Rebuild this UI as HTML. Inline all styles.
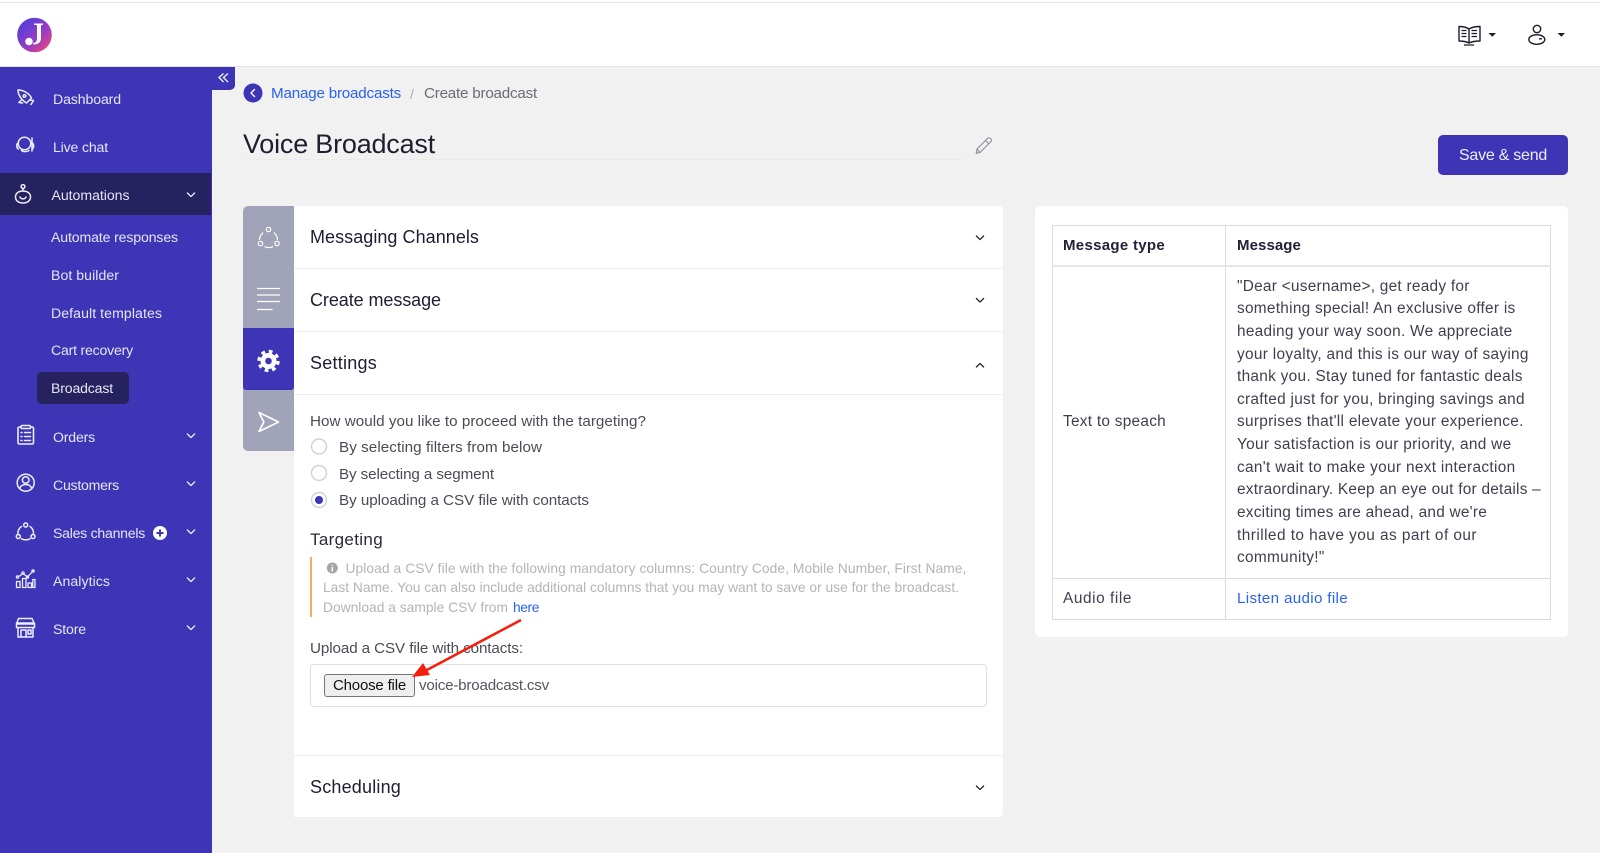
<!DOCTYPE html>
<html lang="en">
<head>
<meta charset="utf-8">
<title>Voice Broadcast</title>
<style>
html,body{margin:0;padding:0;width:1600px;height:853px;overflow:hidden;background:#f1f1f2;font-family:"Liberation Sans",Arial,sans-serif;color:#1c1c30}
#w{position:absolute;left:0;top:0;width:1600px;height:853px;filter:blur(.35px)}
.b{position:absolute;display:block}
.t{position:absolute;white-space:nowrap;height:20px;line-height:20px;font-size:14px;margin-top:1px}
.s{color:#e6e5f7;font-size:14.1px;margin-top:0}
.d{color:#1d1d33;font-size:18px}
.g{color:#4b4b57;font-size:15.2px}
.n{color:#b4b4b8;font-size:13.8px}
.m{color:#3f3f50;font-size:15.4px}
a{color:#2a62f0;text-decoration:none}
</style>
</head>
<body>
<div id="w">
<div class="b" style="left:0;top:0;width:1600px;height:67px;background:#fff;border-bottom:1px solid #e6e6e8;box-sizing:border-box"></div>
<div class="b" style="left:0;top:2px;width:1600px;height:1px;background:#e6e6e8"></div>
<div class="b" style="left:0;top:67px;width:212px;height:786px;background:#3d35b5"></div>
<div class="b" style="left:0;top:173px;width:211px;height:42px;background:#26215f"></div>
<div class="b" style="left:37px;top:372px;width:92px;height:32px;background:#26215f;border-radius:5px"></div>
<div class="b" style="left:211px;top:67px;width:24px;height:23px;background:#3d35b5;border-radius:0 0 5px 0"></div>

<div class="b" style="left:243px;top:159px;width:722px;height:1px;background:#ebebec"></div>
<div class="b" style="left:1438px;top:135px;width:130px;height:40px;background:#3d35b5;border-radius:5px"></div>

<div class="b" style="left:243px;top:206px;width:51px;height:245px;background:#a1a3b9;border-radius:5px 0 0 5px"></div>
<div class="b" style="left:243px;top:328px;width:51px;height:62px;background:#3d35b5;border-radius:0 0 3px 3px"></div>
<div class="b" style="left:294px;top:206px;width:709px;height:611px;background:#fff;border-radius:0 4px 4px 0"></div>
<div class="b" style="left:294px;top:268px;width:709px;height:1px;background:#ececee"></div>
<div class="b" style="left:294px;top:331px;width:709px;height:1px;background:#ececee"></div>
<div class="b" style="left:294px;top:394px;width:709px;height:1px;background:#ececee"></div>
<div class="b" style="left:294px;top:755px;width:709px;height:1px;background:#ececee"></div>
<div class="b" style="left:310px;top:557px;width:2px;height:60px;background:#f7ae5c"></div>
<div class="b" style="left:310px;top:664px;width:677px;height:43px;box-sizing:border-box;background:#fff;border:1px solid #dfdfe2;border-radius:4px"></div>
<div class="b" style="left:324px;top:674px;width:91px;height:23px;box-sizing:border-box;background:#efefef;border:1px solid #767676;border-radius:3px"></div>

<div class="b" style="left:1035px;top:206px;width:533px;height:431px;background:#fff;border-radius:5px"></div>
<div class="b" style="left:1052px;top:225px;width:499px;height:395px;box-sizing:border-box;border:1px solid #dcdcdf"></div>
<div class="b" style="left:1225px;top:225px;width:1px;height:395px;background:#dcdcdf"></div>
<div class="b" style="left:1052px;top:265px;width:499px;height:2px;background:#e6e6e8"></div>
<div class="b" style="left:1052px;top:578px;width:499px;height:1px;background:#dcdcdf"></div>

<svg class="b" style="left:0;top:0" width="1600" height="853" viewBox="0 0 1600 853" fill="none">
<defs>
<linearGradient id="lg" x1="0" y1="0" x2="1" y2="1"><stop offset="0" stop-color="#3d3fe0"/><stop offset=".6" stop-color="#9c3cc4"/><stop offset="1" stop-color="#ff4a60"/></linearGradient>
<path id="ch" d="M-3.600-2 0 1.600 3.600-2" stroke-width="1.300" stroke-linecap="round" stroke-linejoin="round"/>
</defs>
<circle cx="34.500" cy="35" r="17.300" fill="url(#lg)"/>
<path d="M34 23.500H43V24.800L41 25.300V38C41 42 38.500 44.500 33.500 44.500L33 43C35.500 43 37 41.500 37 38.500V25.300L34 24.800Z" fill="#fff"/>
<circle cx="29" cy="41.500" r="3.800" fill="#fff"/>

<g stroke="#eeedfb" stroke-width="1.500" stroke-linecap="round" stroke-linejoin="round">
<path d="M18 90C23 90 29 93 31.500 98L26.500 103C22 100.500 18 95 18 90Z"/><circle cx="24.500" cy="96" r="1.300"/><path d="M21.500 100 18.800 102.500 22.500 103M29.800 100 33.500 100.500 31 104.500"/>
<circle cx="24.500" cy="143.500" r="6.300"/><path d="M18 143C16.300 144 16.300 148 18.300 149M32 138V151M32.500 143C34 144 34 148 32.500 149M21.500 150.500C23.500 152 26.500 152 29 150.500"/>
<circle cx="23" cy="186.500" r="1.900"/><path d="M23 188.500V191"/><path d="M15.500 197C15.500 193 19 191 23 191 27 191 30.500 193 30.500 197 30.500 201 27 203 23 203 19 203 15.500 201 15.500 197Z"/><path d="M20 197C21 199.500 25 199.500 26 197"/>
<rect x="18" y="427" width="15.500" height="17" rx="1.300" stroke-width="1.600"/><rect x="21" y="425.500" width="9.500" height="3" rx="1" fill="#3d35b5" stroke-width="1.500"/><path d="M24.500 432.500H30.500M24.500 436.500H30.500M24.500 440.500H30.500M21 432.500H22M21 436.500H22M21 440.500H22"/>
<circle cx="25.700" cy="482.700" r="8.500"/><circle cx="25.700" cy="480" r="3.300"/><path d="M19.700 488.700C20.500 485.500 23 484.500 25.700 484.500 28.400 484.500 30.900 485.500 31.700 488.700"/>
<path d="M21.500 526.500C19 528 18 530.500 17.800 533.500M30 526.500C32.500 528 33.500 530.500 33.500 533.500M21.500 538.800C24 540 27.500 540 30 538.800"/><circle cx="25.700" cy="525" r="2"/><circle cx="18.300" cy="536.500" r="2"/><circle cx="33" cy="536.500" r="2"/>
<path stroke-width="1.300" d="M16.500 587.500V581.500H20V587.500ZM22.500 587.500V578.500H26V587.500ZM28 587.500V583H31.500V587.500ZM32.800 587.500V579.500H35V587.500Z"/><path stroke-width="1.200" d="M18 577 23 573.500 27.500 577 33 571"/><circle cx="17.500" cy="577" r="1.200" stroke-width="1.100"/><circle cx="23" cy="573" r="1.200" stroke-width="1.100"/><circle cx="27.500" cy="577" r="1.200" stroke-width="1.100"/><circle cx="33" cy="571" r="1.200" stroke-width="1.100"/>
<path d="M18.500 618.500H32L34.500 624V627.500H16.500V624ZM18 627.500V637H33V627.500M21 637V630H26V637M28 630H31V634H28Z"/><path d="M17 623.500H34" stroke-width="2.500"/>
</g>
<circle cx="160" cy="533" r="7" fill="#fff"/><path d="M160 529.500V536.500M156.500 533H163.500" stroke="#3d35b5" stroke-width="2"/>
<g stroke="#eeedfb" transform="translate(191,0)">
<use href="#ch" y="195"/><use href="#ch" y="436"/><use href="#ch" y="484"/><use href="#ch" y="532"/><use href="#ch" y="580"/><use href="#ch" y="628"/>
</g>
<path d="M228 73.500 223.500 77.500 228 82M223.500 73.500 219 77.500 223.500 82" stroke="#eeedfb" stroke-width="1.400"/>

<circle cx="253" cy="93" r="9.500" fill="#3d35b5"/><path d="M254.500 89.500 251 93 254.500 96.500" stroke="#fff" stroke-width="1.400" stroke-linecap="round" stroke-linejoin="round"/>
<g stroke="#8d8d98" stroke-width="1.100" stroke-linejoin="round"><path d="M977 149 987.500 138.500C989 137.500 990.500 138 991 139 991.800 140 991.500 141 990.500 142L980 152.500 976.200 153.300ZM985.500 140.500 989 144M977 149 980 152.500"/></g>
<g stroke="#1d1d2e" stroke-width="1.400" stroke-linejoin="round">
<path d="M1469 29C1466 27 1462 26.500 1459 26.500V41C1462 41 1466 41.500 1469 43 1472 41.500 1476 41 1480 41V26.500C1476 26.500 1472 27 1469 29ZM1469 29V43"/><path stroke-width="1.200" d="M1461.500 30.500H1466.500M1461.500 33.500H1466.500M1461.500 36.500H1466.500M1471.500 30.500H1477M1471.500 33.500H1477M1471.500 36.500H1477M1464 45H1474"/>
<circle cx="1537" cy="29" r="3.700"/><ellipse cx="1536.800" cy="39.500" rx="8" ry="4.800"/><path d="M1539 38.800H1542"/>
</g>
<path d="M1488.500 33H1496L1492.300 36.800ZM1557.500 33H1565L1561.300 36.800Z" fill="#1d1d2e"/>

<g stroke="#fff" stroke-width="1.200">
<path d="M263 232.500C261 234.500 259.500 237 259.500 240M274 232.500C276 234.500 277.500 237 277.500 240M264.500 246.500C267 248 271 248 273 246.500"/><circle cx="268.500" cy="229.500" r="2.200"/><circle cx="260.500" cy="243.500" r="2.200"/><circle cx="277" cy="243.500" r="2.200"/>
<path d="M257 288.500H280M257 295H280M257 301.500H280" stroke-width="1.300"/><path d="M257 309.500H272.500" stroke-width="1.300"/>
</g>
<circle cx="268.500" cy="361" r="8" fill="#fff"/><circle cx="268.500" cy="361" r="9.500" stroke="#fff" stroke-width="3.400" stroke-dasharray="3.700 3.760"/><circle cx="268.500" cy="361" r="3.300" fill="#3d35b5"/>
<path d="M259 412.500 278.500 422 259 431.500 263.800 422Z" stroke="#fff" stroke-width="1.700" stroke-linejoin="round"/>

<g stroke="#23233a">
<use href="#ch" x="980" y="238"/><use href="#ch" x="980" y="300.500"/><use href="#ch" transform="translate(980,365) scale(1,-1)"/><use href="#ch" x="980" y="788"/>
</g>
<g stroke="#ccd0e0" stroke-width="1.400" fill="#fff">
<circle cx="319" cy="446.500" r="7.500"/><circle cx="319" cy="473" r="7.500"/><circle cx="319" cy="500" r="7.500"/>
</g>
<circle cx="319" cy="500" r="4" fill="#3d35b5"/>
<circle cx="332.300" cy="568" r="5.500" fill="#a5a5a9"/><path d="M332.300 567V571.500M332.300 564.700V565.800" stroke="#fff" stroke-width="1.500"/>
</svg>

<span class="t s" style="left:53px;top:89px;--w:68">Dashboard</span>
<span class="t s" style="left:53px;top:137px;--w:55">Live chat</span>
<span class="t s" style="left:51.500px;top:185px;--w:78">Automations</span>
<span class="t s" style="left:51px;top:227px;--w:127">Automate responses</span>
<span class="t s" style="left:51px;top:265px;--w:68">Bot builder</span>
<span class="t s" style="left:51px;top:303px;--w:111">Default templates</span>
<span class="t s" style="left:51px;top:340px;--w:82">Cart recovery</span>
<span class="t s" style="left:51px;top:378px;--w:62">Broadcast</span>
<span class="t s" style="left:53px;top:427px;--w:42">Orders</span>
<span class="t s" style="left:53px;top:475px;--w:66">Customers</span>
<span class="t s" style="left:53px;top:523px;--w:92">Sales channels</span>
<span class="t s" style="left:53px;top:571px;--w:57">Analytics</span>
<span class="t s" style="left:53px;top:619px;--w:33">Store</span>

<a class="t" href="#" style="left:271px;top:83px;font-size:15.200px;--w:130">Manage broadcasts</a>
<span class="t" style="left:410px;top:83px;color:#a8a8ae;font-size:14px">/</span>
<span class="t" style="left:424px;top:83px;color:#6b6b74;font-size:15.200px;--w:113">Create broadcast</span>
<span class="t" style="left:243px;top:133px;font-size:27px;color:#1e1e30;--w:192">Voice Broadcast</span>
<span class="t" style="left:1459px;top:145px;font-size:16px;color:#eeedfb;--w:88">Save &amp; send</span>

<span class="t d" style="left:310px;top:225.500px;--w:169">Messaging Channels</span>
<span class="t d" style="left:310px;top:288.500px;--w:131">Create message</span>
<span class="t d" style="left:310px;top:351.500px;--w:67">Settings</span>
<span class="t d" style="left:310px;top:775.500px;--w:91">Scheduling</span>

<span class="t g" style="left:310px;top:411px;--w:336">How would you like to proceed with the targeting?</span>
<span class="t g" style="left:339px;top:437px;--w:203">By selecting filters from below</span>
<span class="t g" style="left:339px;top:463.500px;--w:155">By selecting a segment</span>
<span class="t g" style="left:339px;top:490px;--w:250">By uploading a CSV file with contacts</span>
<span class="t" style="left:310px;top:529px;font-size:17px;color:#2a2a38;--w:73">Targeting</span>
<span class="t n" style="left:345.500px;top:558px;--w:621">Upload a CSV file with the following mandatory columns: Country Code, Mobile Number, First Name,</span>
<span class="t n" style="left:323px;top:577px;--w:636">Last Name. You can also include additional columns that you may want to save or use for the broadcast.</span>
<span class="t n" style="left:323px;top:597px;--w:185">Download a sample CSV from</span>
<a class="t" href="#" style="left:513px;top:597px;font-size:13.800px;--w:26">here</a>
<span class="t g" style="left:310px;top:638px;--w:213">Upload a CSV file with contacts:</span>
<span class="t" style="left:333px;top:675px;font-size:15px;color:#111;--w:73">Choose file</span>
<span class="t g" style="left:419px;top:675px;color:#56565f;--w:130">voice-broadcast.csv</span>

<span class="t" style="left:1063px;top:235px;font-size:15px;font-weight:bold;color:#22223a;--w:102">Message type</span>
<span class="t" style="left:1237px;top:235px;font-size:15px;font-weight:bold;color:#22223a;--w:64">Message</span>
<span class="t m" style="left:1063px;top:411px;--w:103">Text to speach</span>
<span class="t m" style="left:1063px;top:588px;--w:69">Audio file</span>
<a class="t" href="#" style="left:1237px;top:588px;font-size:15.200px;--w:111">Listen audio file</a>
<span class="t m" style="left:1237px;top:276px;--w:232.600">"Dear &lt;username&gt;, get ready for</span>
<span class="t m" style="left:1237px;top:298px;--w:278.500">something special! An exclusive offer is</span>
<span class="t m" style="left:1237px;top:321px;--w:275.500">heading your way soon. We appreciate</span>
<span class="t m" style="left:1237px;top:344px;--w:291.800">your loyalty, and this is our way of saying</span>
<span class="t m" style="left:1237px;top:366px;--w:285.700">thank you. Stay tuned for fantastic deals</span>
<span class="t m" style="left:1237px;top:389px;--w:287.800">crafted just for you, bringing savings and</span>
<span class="t m" style="left:1237px;top:411px;--w:286.700">surprises that'll elevate your experience.</span>
<span class="t m" style="left:1237px;top:434px;--w:274.500">Your satisfaction is our priority, and we</span>
<span class="t m" style="left:1237px;top:457px;--w:278.500">can't wait to make your next interaction</span>
<span class="t m" style="left:1237px;top:479px;--w:304">extraordinary. Keep an eye out for details –</span>
<span class="t m" style="left:1237px;top:502px;--w:250">exciting times are ahead, and we're</span>
<span class="t m" style="left:1237px;top:525px;--w:240">thrilled to have you as part of our</span>
<span class="t m" style="left:1237px;top:547px;--w:87.700">community!"</span>

<svg class="b" style="left:0;top:0;pointer-events:none" width="1600" height="853" viewBox="0 0 1600 853" fill="none">
<path d="M521 620 425 671" stroke="#f4200f" stroke-width="2.600"/>
<path d="M412 677 423 663 430 675Z" fill="#f4200f"/>
</svg>
</div>
<script>
document.querySelectorAll('.t').forEach(function(e){
var w=parseFloat(getComputedStyle(e).getPropertyValue('--w'));
if(!w)return;
var m=e.getBoundingClientRect().width,n=e.textContent.length;
e.style.letterSpacing=((w-m)/n).toFixed(3)+'px';
});
</script>
</body>
</html>
